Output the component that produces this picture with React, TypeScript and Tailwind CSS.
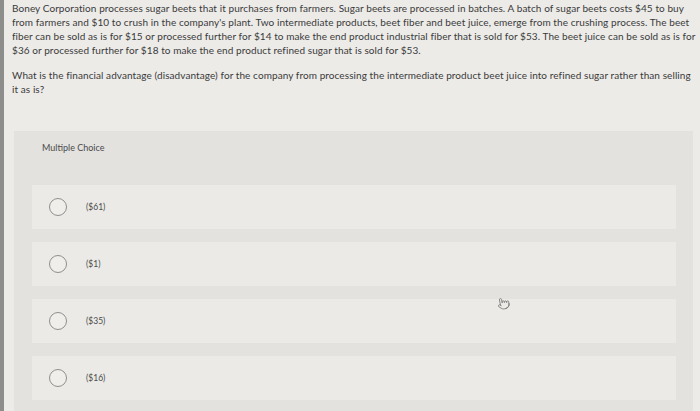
import React from 'react';
import { Pointer } from 'lucide-react';

const paragraph = [
  'Boney Corporation processes sugar beets that it purchases from farmers. Sugar beets are processed in batches. A batch of sugar beets costs $45 to buy',
  "from farmers and $10 to crush in the company's plant. Two intermediate products, beet fiber and beet juice, emerge from the crushing process. The beet",
  'fiber can be sold as is for $15 or processed further for $14 to make the end product industrial fiber that is sold for $53. The beet juice can be sold as is for',
  '$36 or processed further for $18 to make the end product refined sugar that is sold for $53.',
];

const question = [
  'What is the financial advantage (disadvantage) for the company from processing the intermediate product beet juice into refined sugar rather than selling',
  'it as is?',
];

const choices = ['($61)', '($1)', '($35)', '($16)'];

export default function App() {
  return (
    <div
      className="relative flex h-[411px] w-[700px] overflow-hidden bg-[#ecebe8] text-[#3a3a3a]"
      style={{ fontFamily: 'Lato, "Open Sans", sans-serif' }}
    >
      <div className="w-[4px] shrink-0 bg-[#8d8d8b]" />
      <div className="flex flex-1 flex-col pl-[8px] pr-[6px] pt-[1px]">
        <div className="text-[10px] leading-[14px] tracking-[0.08px]">
          {paragraph.map((line) => (
            <div key={line} className="whitespace-nowrap">{line}</div>
          ))}
        </div>
        <div className="mt-[11px] text-[10px] leading-[14px] tracking-[0.08px]">
          {question.map((line) => (
            <div key={line} className="whitespace-nowrap">{line}</div>
          ))}
        </div>

        <div className="mt-[35px] ml-[2px] mr-[2px] flex flex-1 flex-col bg-[#e3e2df] pl-[18px] pr-[17px]">
          <div className="pt-[11px] pl-[10px] text-[9px] leading-[12px] text-[#4a4a4a]">Multiple Choice</div>
          <div className="mt-[31px] flex flex-col gap-[13px]">
            {choices.map((c) => (
              <div key={c} className="flex h-[44px] items-center bg-[#ebeae7] pl-[17px]">
                <span className="h-[18px] w-[18px] rounded-full border border-[#8f8f8f] bg-[#efeeeb]" />
                <span className="ml-[19px] text-[8.5px] text-[#4a4a4a]">{c}</span>
              </div>
            ))}
          </div>
        </div>
      </div>
      <Pointer className="absolute left-[497px] top-[297px] h-[13px] w-[13px] -rotate-12 text-[#7a7a7a]" strokeWidth={1.5} />
    </div>
  );
}
